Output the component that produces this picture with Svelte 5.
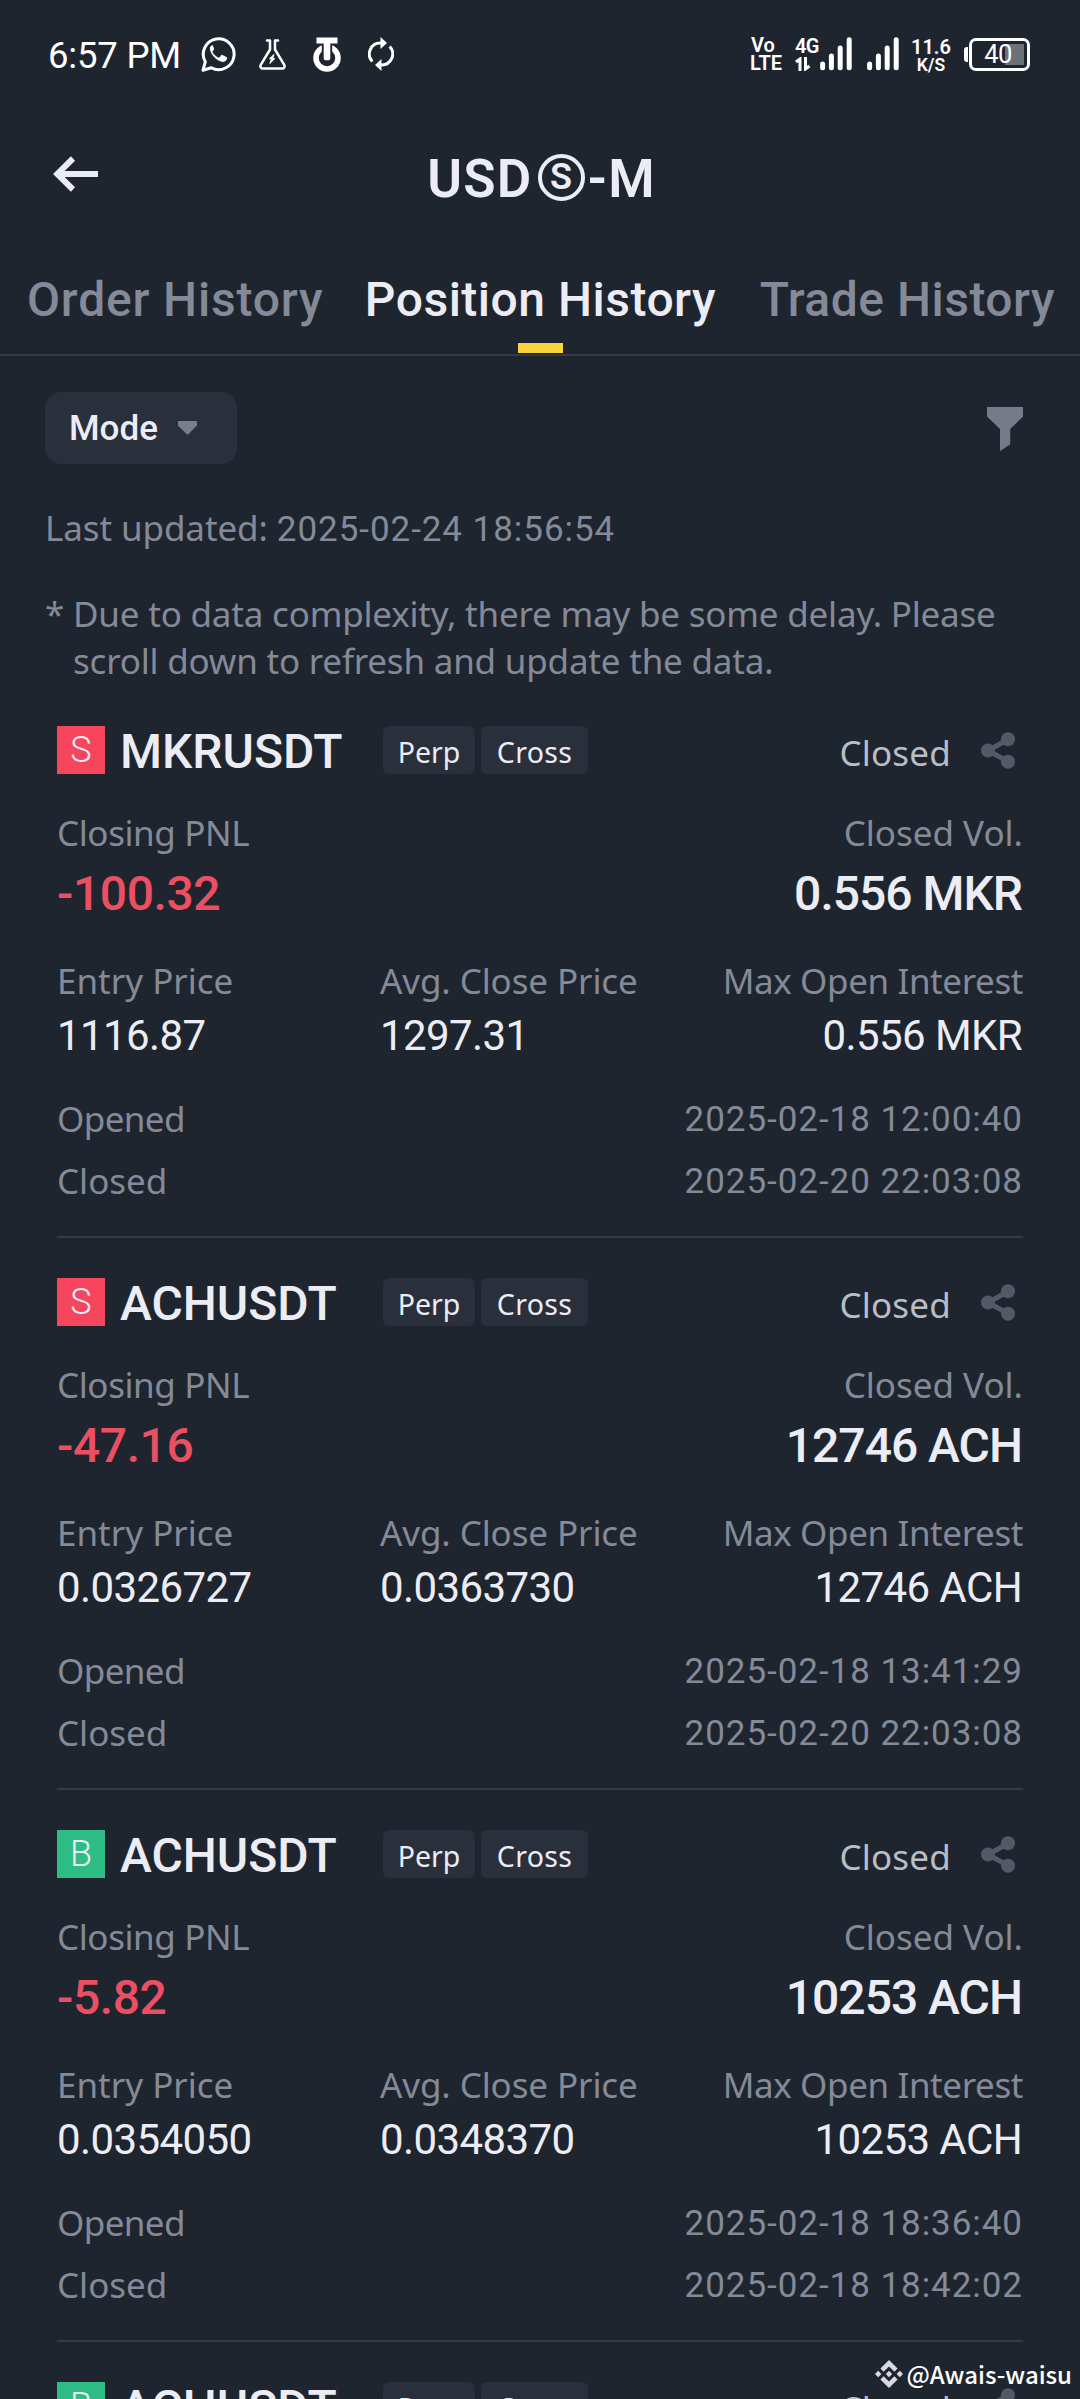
<script>
  const tabs = ["Order History", "Position History", "Trade History"];
  let activeTab = $state("Position History");

  const positions = [
    {
      side: "S",
      symbol: "MKRUSDT",
      pnl: "-100.32",
      volume: "0.556 MKR",
      entry: "1116.87",
      close: "1297.31",
      opened: "2025-02-18 12:00:40",
      closed: "2025-02-20 22:03:08",
    },
    {
      side: "S",
      symbol: "ACHUSDT",
      pnl: "-47.16",
      volume: "12746 ACH",
      entry: "0.0326727",
      close: "0.0363730",
      opened: "2025-02-18 13:41:29",
      closed: "2025-02-20 22:03:08",
    },
    {
      side: "B",
      symbol: "ACHUSDT",
      pnl: "-5.82",
      volume: "10253 ACH",
      entry: "0.0354050",
      close: "0.0348370",
      opened: "2025-02-18 18:36:40",
      closed: "2025-02-18 18:42:02",
    },
    { side: "B", symbol: "ACHUSDT" },
  ];
</script>

{#snippet signal()}
  <svg width="32" height="34" viewBox="0 0 32 34">
    <g stroke="#fff" stroke-width="5" stroke-linecap="round">
      <path d="M2.6 27v3.8M11.4 19v11.8M20.2 11v19.8M29.2 2.8v28" />
    </g>
  </svg>
{/snippet}

<div class="screen">
  <div class="status">
    <span class="time">6:57 PM</span>
    <svg width="35" height="36" viewBox="0 0 35 36">
      <path
        d="M2 34.2l2.300-8.400a15.400 15.400 0 1 1 6 5.900z"
        fill="none"
        stroke="#fff"
        stroke-width="3"
        stroke-linejoin="round"
      />
      <path
        d="M11.800 9.200c-.9-.3-2.200.6-2.800 2.300-1.200 4.200 5.800 13.800 12.800 14.400 2.400.1 4.200-1.400 4.300-3.800 0-.7-.2-1-.7-1.200l-4-1.900c-.6-.3-1-.1-1.400.4l-1.500 1.900c-.3.4-.7.4-1.200.2-2.500-1.100-4.400-2.800-5.700-5.200-.3-.5-.1-.9.2-1.200l1.100-1.400c.3-.4.3-.8.1-1.300z"
        fill="#fff"
      />
    </svg>
    <svg class="flask" width="27" height="31" viewBox="0 0 27 31">
      <path
        d="M8 1.500h3v9L1.900 25.600c-1.100 2 0 3.900 2 3.900h19.200c2 0 3.100-1.900 2-3.900L16 10.500v-9h3"
        fill="none"
        stroke="#fff"
        stroke-width="2.500"
        stroke-linejoin="round"
        stroke-linecap="round"
      />
      <path d="M15 15.500l-4.500 4.200h2l-1.700 4.800 5-4.900h-2.200z" fill="#fff" stroke="#fff" />
    </svg>
    <svg class="power" width="28" height="35" viewBox="0 0 28 35">
      <circle cx="14" cy="21" r="11" fill="none" stroke="#fff" stroke-width="5.500" />
      <path d="M8.800 5v17.500a3 3 0 0 0 3 3h4.400a3 3 0 0 0 3-3V5z" fill="#1f252f" />
      <path d="M3.500 0.500h21v6h-7.200v15a1.800 1.800 0 0 1-1.800 1.800h-3a1.800 1.800 0 0 1-1.800-1.800v-15H3.500z" fill="#fff" />
    </svg>
    <svg class="sync" width="26" height="34" viewBox="0 0 26 34">
      <g fill="none" stroke="#fff" stroke-width="3">
        <path d="M4.300 24.500A11 11 0 0 1 13 6" />
        <path d="M21.700 9.500A11 11 0 0 1 13 28" />
      </g>
      <path d="M12.500 0l6.500 6-6.500 6zM13.500 22l-6.500 6 6.500 6z" fill="#fff" />
    </svg>

    <div class="stack volte"><span>Vo</span><span>LTE</span></div>
    <div class="stack network">
      <span>4G</span>
      <svg width="16" height="14" viewBox="0 0 16 14">
        <path d="M5 14V2L1 5M10.500 0v12l4-3" fill="none" stroke="#fff" stroke-width="3" />
      </svg>
    </div>
    {@render signal()}
    <div class="second-sim">{@render signal()}</div>
    <div class="stack speed"><span>11.6</span><span class="unit">K/S</span></div>
    <div class="battery-tip"></div>
    <div class="battery"><span>40</span></div>
  </div>

  <header>
    <svg class="back" width="46" height="36" viewBox="0 0 46 36">
      <path d="M20 2.500L4.200 18L20 33.500M4.200 18H45" fill="none" stroke="#ecedf4" stroke-width="6" />
    </svg>
    <h1>USD<span class="coin">S</span>-M</h1>
  </header>

  <nav>
    {#each tabs as tab}
      <button class="tab" class:active={tab === activeTab} onclick={() => (activeTab = tab)}>{tab}</button>
    {/each}
  </nav>

  <div class="filters">
    <button class="mode">
      <span>Mode</span>
      <svg width="19" height="14" viewBox="0 0 19 14">
        <path d="M0 0h19v4.500L9.500 14L0 4.500z" fill="#787e8b" />
      </svg>
    </button>
    <svg class="funnel" width="36" height="44" viewBox="0 0 36 44">
      <path d="M0 0h36v9.500L23.200 22v15.500L13 44V22L0 9.500z" fill="#757b88" />
    </svg>
  </div>

  <p class="updated">Last updated: <span>2025-02-24 18:56:54</span></p>
  <p class="note">
    <span class="star">*</span>
    <span>Due to data complexity, there may be some delay. Please<br />scroll down to refresh and update the data.</span>
  </p>

  {#each positions as p}
    <section class="card">
      <div class="head">
        <span class="side" class:buy={p.side === "B"}>{p.side}</span>
        <span class="symbol">{p.symbol}</span>
        <span class="chip">Perp</span>
        <span class="chip cross">Cross</span>
        <span class="state">Closed</span>
        <svg width="34" height="37" viewBox="0 0 34 37">
          <path d="M27 7.500L7 18.500L27 29.500" fill="none" stroke="#535966" stroke-width="5" />
          <circle cx="7" cy="18.500" r="7" fill="#535966" />
          <circle cx="27" cy="7.200" r="7" fill="#535966" />
          <circle cx="27" cy="29.800" r="7" fill="#535966" />
        </svg>
      </div>
      {#if p.pnl}
        <div class="row">
          <span class="label pnl-label">Closing PNL</span>
          <span class="label">Closed Vol.</span>
        </div>
        <div class="row big">
          <span class="pnl">{p.pnl}</span>
          <span class="volume">{p.volume}</span>
        </div>
        <div class="metrics">
          <span class="label">Entry Price</span>
          <span class="label close-label">Avg. Close Price</span>
          <span class="label interest">Max Open Interest</span>
          <span class="value">{p.entry}</span>
          <span class="value">{p.close}</span>
          <span class="value end">{p.volume}</span>
        </div>
        <div class="row times">
          <span class="label tight">Opened</span>
          <span class="date">{p.opened}</span>
        </div>
        <div class="row">
          <span class="label">Closed</span>
          <span class="date">{p.closed}</span>
        </div>
      {/if}
    </section>
  {/each}

  <div class="watermark">
    <svg width="28" height="28" viewBox="0 0 28 28">
      <g fill="#d8dae0">
        <path d="M14 0l8.600 8.600-3.200 3.200L14 6.400l-5.400 5.400-3.200-3.200zM14 28l8.600-8.600-3.200-3.200L14 21.600l-5.400-5.400-3.200 3.200z" />
        <path d="M3.200 10.800L6.400 14l-3.200 3.200L0 14zM24.800 10.800L28 14l-3.200 3.200L21.600 14zM14 10.800l3.200 3.200-3.200 3.200-3.200-3.200z" />
      </g>
    </svg>
    @Awais-waisu
  </div>
</div>

<style>
  :global(body) {
    margin: 0;
    background: #1f252f;
  }

  .screen {
    position: relative;
    width: 1080px;
    height: 2399px;
    overflow: hidden;
    background: #1f252f;
    color: #ecedf4;
    font-family: "Noto Sans", sans-serif;
    font-size: 35px;
  }

  svg {
    display: block;
    flex: none;
  }

  button {
    border: 0;
    padding: 0;
    background: none;
    color: inherit;
    font: inherit;
  }

  /* status bar */
  .status {
    display: flex;
    align-items: center;
    height: 108px;
    padding: 0 50px 0 48px;
    color: #fff;
    font-family: Roboto, sans-serif;
  }

  .time {
    width: 153px;
    padding-top: 3px;
    font-size: 36.5px;
    letter-spacing: -0.2px;
  }

  .flask {
    margin-left: 23px;
  }

  .power {
    margin-left: 27px;
  }

  .sync {
    margin-left: 27px;
  }

  .stack {
    display: flex;
    flex-direction: column;
    font-size: 20px;
    font-weight: 600;
    line-height: 18px;
  }

  .volte {
    margin-left: auto;
    width: 45px;
  }

  .volte span:first-child {
    padding-left: 1px;
  }

  .network {
    width: 25px;
    gap: 2px;
    letter-spacing: -0.7px;
  }

  .second-sim {
    margin: 0 12px 0 15px;
  }

  .speed {
    align-items: center;
    width: 40px;
    padding-top: 4px;
  }

  .unit {
    font-size: 17.5px;
  }

  .battery-tip {
    width: 4px;
    height: 15px;
    margin-left: 13px;
    border-radius: 3px 0 0 3px;
    background: #fff;
  }

  .battery {
    display: flex;
    align-items: center;
    justify-content: center;
    box-sizing: border-box;
    width: 61px;
    height: 33px;
    margin-left: 1px;
    border: 3px solid #fff;
    border-radius: 7px;
    background: linear-gradient(#6c717a, #6c717a) 33px center / 19px 21px no-repeat;
    font-size: 25.5px;
    letter-spacing: -0.5px;
  }

  .battery span {
    margin-right: 3px;
  }

  /* title */
  header {
    display: grid;
    grid-template-columns: 200px 1fr 200px;
    align-items: center;
    height: 140px;
  }

  .back {
    margin: 0 0 8px 53px;
  }

  h1 {
    display: flex;
    align-items: center;
    justify-content: center;
    margin: 0;
    padding: 1px 0 0 3px;
    font: 600 53px/60px Roboto, sans-serif;
    letter-spacing: 1.2px;
  }

  .coin {
    display: flex;
    align-items: center;
    justify-content: center;
    box-sizing: border-box;
    width: 47px;
    height: 47px;
    margin: 0 3px 3px 5px;
    border: 4.5px solid #ecedf4;
    border-radius: 50%;
    font-size: 36px;
    letter-spacing: 0;
  }

  /* tabs */
  nav {
    display: flex;
    justify-content: space-between;
    padding: 22px 25px 1px 27px;
    border-bottom: 2px solid #343943;
    color: #848a97;
  }

  .tab {
    display: flex;
    flex-direction: column;
    align-items: center;
    gap: 13px;
    font: 480 48px/60px Roboto, sans-serif;
    letter-spacing: 0.5px;
  }

  .tab:first-child {
    margin-right: -4px;
    letter-spacing: 0.8px;
  }

  .tab::after {
    content: "";
    width: 45px;
    height: 10px;
  }

  .tab.active {
    margin-left: 2px;
    color: #ecedf4;
  }

  .tab.active::after {
    background: #f9d33e;
  }

  /* filters */
  .filters {
    display: flex;
    align-items: center;
    justify-content: space-between;
    margin: 36px 57px 0 45px;
  }

  .mode {
    display: flex;
    align-items: center;
    gap: 20px;
    width: 192px;
    height: 72px;
    padding-left: 24px;
    border-radius: 16px;
    background: #2a303b;
    font: 500 35px/40px Roboto, sans-serif;
  }

  .mode span {
    padding-top: 2px;
  }

  .funnel {
    margin-top: 2px;
  }

  .updated {
    margin: 40px 0 0 45px;
    color: #848a97;
    line-height: 48px;
    letter-spacing: -0.1px;
  }

  .updated span {
    font-family: Roboto, sans-serif;
    letter-spacing: 0.95px;
  }

  .note {
    display: flex;
    margin: 36px 0 42px 45px;
    color: #848a97;
    line-height: 47px;
    letter-spacing: -0.2px;
    white-space: nowrap;
  }

  .star {
    width: 28px;
  }

  /* position cards */
  .card {
    box-sizing: border-box;
    height: 512px;
    margin: 0 57px 40px;
    border-bottom: 2px solid #343943;
  }

  .head {
    display: flex;
    align-items: center;
    height: 48px;
    margin-bottom: 37px;
    padding-right: 8px;
  }

  .side {
    width: 48px;
    margin-right: 15px;
    background: #f6465d;
    font: 300 36px/48px Roboto, sans-serif;
    text-align: center;
  }

  .side.buy {
    background: #2ebd85;
  }

  .symbol {
    width: 263px;
    padding-top: 3px;
    font: 500 48px/48px Roboto, sans-serif;
  }

  .chip {
    box-sizing: border-box;
    width: 92px;
    height: 48px;
    padding-top: 2px;
    border-radius: 6px;
    background: #2a303b;
    font-size: 28.5px;
    line-height: 48px;
    text-align: center;
  }

  .cross {
    width: 107px;
    margin-left: 6px;
    letter-spacing: 0.3px;
  }

  .state {
    margin: 4px 30px 0 auto;
    color: #b9bdc5;
    letter-spacing: 0.2px;
  }

  .row {
    display: flex;
    justify-content: space-between;
    line-height: 44px;
  }

  .label {
    color: #848a97;
    line-height: 44px;
  }

  .pnl-label {
    letter-spacing: -0.4px;
  }

  .big {
    margin-top: 11px;
    font: 500 48px/56px Roboto, sans-serif;
  }

  .pnl {
    color: #eb4f62;
    letter-spacing: -0.4px;
  }

  .volume {
    margin-right: 1px;
    letter-spacing: -1px;
  }

  .metrics {
    display: grid;
    grid-template-columns: 323px 1fr auto;
    row-gap: 9px;
    margin-top: 37px;
  }

  .close-label {
    letter-spacing: -0.1px;
  }

  .interest {
    letter-spacing: -0.4px;
  }

  .value {
    font: 400 42px/48px Roboto, sans-serif;
    letter-spacing: -0.6px;
  }

  .end {
    margin-right: 1px;
    text-align: right;
  }

  .times {
    margin: 37px 0 18px;
  }

  .tight {
    letter-spacing: -0.6px;
  }

  .date {
    padding-top: 2px;
    color: #848a97;
    font-family: Roboto, sans-serif;
    line-height: 42px;
    letter-spacing: 0.95px;
  }

  .watermark {
    position: absolute;
    right: 8px;
    bottom: 8px;
    display: flex;
    align-items: center;
    gap: 3px;
    color: #fff;
    font: 500 24px/34px "Noto Sans CJK SC", sans-serif;
  }
</style>
